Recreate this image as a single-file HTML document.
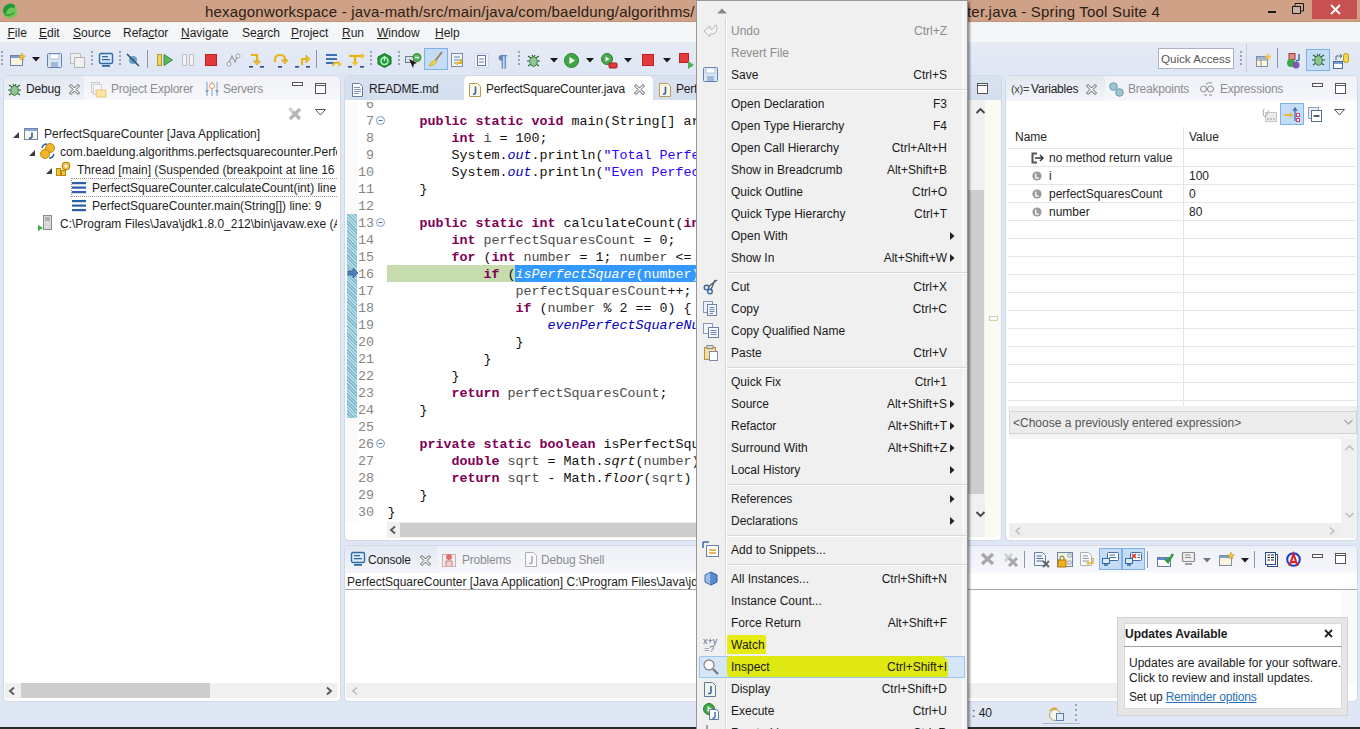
<!DOCTYPE html><html><head><meta charset="utf-8"><style>
*{margin:0;padding:0;box-sizing:border-box}
html,body{width:1360px;height:729px;overflow:hidden}
body{background:#dfe6f4;font-family:"Liberation Sans",sans-serif;font-size:12px;color:#1e1e1e;position:relative}
.a{position:absolute}
.t{position:absolute;white-space:pre;line-height:14px}
.panel{position:absolute;background:#fff;border:1px solid #d2d9e6;border-radius:5px;overflow:hidden}
.mono{font-family:"Liberation Mono",monospace;font-size:13.33px;line-height:17px;white-space:pre}
.k{color:#7f0055;font-weight:bold}
.s{color:#2a00ff}
.f{color:#0000c0;font-style:italic}
.m{font-style:italic}
.v{color:#4a4a4a}
svg{position:absolute;overflow:visible}
</style></head><body>
<div class="a" style="left:0px;top:0px;width:1360px;height:22px;background:#cfa287"></div>
<div class="a" style="left:0px;top:21px;width:1360px;height:1px;background:#c29579"></div>
<svg style="left:1px;top:2px" width="18" height="18" viewBox="0 0 18 18"><circle cx="9" cy="9" r="7.2" fill="#6cc656"/><path d="M2 9.5A7.2 7.2 0 0 1 14 3.5L13 6Q8 4 6 9L4 13Z" fill="#1f9a3a"/><path d="M4 13Q9 14 13 11" stroke="#17802e" stroke-width="1" fill="none"/></svg>
<div class="t" style="left:205px;top:3px;font-size:15px;line-height:17px;letter-spacing:0.19px;color:#2b2016">hexagonworkspace - java-math/src/main/java/com/baeldung/algorithms/</div>
<div class="t" style="left:967px;top:3px;font-size:15px;line-height:17px;letter-spacing:0.19px;color:#2b2016">ter.java - Spring Tool Suite 4</div>
<div class="a" style="left:1268px;top:11px;width:8px;height:2px;background:#1a1a1a"></div>
<svg style="left:1292px;top:3px" width="12" height="11" viewBox="0 0 12 11"><rect x="0.5" y="3.5" width="8" height="7" fill="#c8b4a6" stroke="#1a1a1a"/><path d="M3 3.5V0.5H11.5V8H9" fill="none" stroke="#1a1a1a"/></svg>
<div class="a" style="left:1312px;top:0px;width:45px;height:19px;background:#c75050"></div>
<svg style="left:1330px;top:4px" width="11" height="11" viewBox="0 0 11 11"><path d="M1 1L10 10M10 1L1 10" stroke="#fff" stroke-width="1.8"/></svg>
<div class="a" style="left:0px;top:22px;width:1360px;height:20px;background:#f5f6f8"></div>
<div class="t" style="left:7.5px;top:26px;color:#1e1e1e"><u>F</u>ile</div>
<div class="t" style="left:39px;top:26px;color:#1e1e1e"><u>E</u>dit</div>
<div class="t" style="left:73px;top:26px;color:#1e1e1e"><u>S</u>ource</div>
<div class="t" style="left:123px;top:26px;color:#1e1e1e">Refa<u>c</u>tor</div>
<div class="t" style="left:181px;top:26px;color:#1e1e1e"><u>N</u>avigate</div>
<div class="t" style="left:242px;top:26px;color:#1e1e1e">Se<u>a</u>rch</div>
<div class="t" style="left:291px;top:26px;color:#1e1e1e"><u>P</u>roject</div>
<div class="t" style="left:342px;top:26px;color:#1e1e1e"><u>R</u>un</div>
<div class="t" style="left:377px;top:26px;color:#1e1e1e"><u>W</u>indow</div>
<div class="t" style="left:435px;top:26px;color:#1e1e1e"><u>H</u>elp</div>
<div class="a" style="left:0px;top:42px;width:1360px;height:32px;background:linear-gradient(#e6ebf5,#dfe6f4)"></div>
<svg style="left:1px;top:50px" width="3" height="18" viewBox="0 0 3 18"><rect x="0" y="1" width="2" height="2" fill="#9aa3b3"/><rect x="0" y="5" width="2" height="2" fill="#9aa3b3"/><rect x="0" y="9" width="2" height="2" fill="#9aa3b3"/><rect x="0" y="13" width="2" height="2" fill="#9aa3b3"/></svg>
<svg style="left:10px;top:53px" width="15" height="14" viewBox="0 0 15 14"><rect x="0.5" y="2.5" width="12" height="10" fill="#fbf4dc" stroke="#6f86a8"/><rect x="1" y="3" width="11" height="2" fill="#7ea0d0"/><path d="M12 0l1 2.5 2.5 0.5-2 1.5 0.5 2.5-2-1.5-2 1.5 0.5-2.5-2-1.5 2.5-0.5z" fill="#f5c542" stroke="#c9951a" stroke-width="0.5"/></svg>
<svg style="left:32px;top:57px" width="8" height="5" viewBox="0 0 8 5"><path d="M0 0H8L4 4.5Z" fill="#1a1a1a"/></svg>
<svg style="left:47px;top:53px" width="15" height="15" viewBox="0 0 15 15"><rect x="0.5" y="0.5" width="14" height="14" rx="1" fill="#dbe6f3" stroke="#5f82b5"/><rect x="3" y="1" width="9" height="5" fill="#fff" stroke="#8aa5cc" stroke-width="0.6"/><rect x="4" y="9" width="7" height="5" fill="#9fb7d8"/></svg>
<svg style="left:70px;top:53px" width="15" height="15" viewBox="0 0 15 15"><rect x="0.5" y="0.5" width="10" height="10" fill="#eee" stroke="#bbb"/><rect x="4.5" y="4.5" width="10" height="10" fill="#f0f0f0" stroke="#b5b5b5"/></svg>
<svg style="left:91px;top:50px" width="3" height="18" viewBox="0 0 3 18"><rect x="0" y="1" width="2" height="2" fill="#9aa3b3"/><rect x="0" y="5" width="2" height="2" fill="#9aa3b3"/><rect x="0" y="9" width="2" height="2" fill="#9aa3b3"/><rect x="0" y="13" width="2" height="2" fill="#9aa3b3"/></svg>
<svg style="left:99px;top:53px" width="14" height="14" viewBox="0 0 14 14"><rect x="0.5" y="0.5" width="13" height="10" rx="1.5" fill="#dfeaf7" stroke="#2f6aa8" stroke-width="1.4"/><rect x="3" y="3" width="6" height="1.3" fill="#2f6aa8"/><rect x="3" y="6" width="8" height="1.3" fill="#2f6aa8"/><rect x="3" y="12" width="8" height="1.8" fill="#2f6aa8"/></svg>
<svg style="left:119px;top:50px" width="3" height="18" viewBox="0 0 3 18"><rect x="0" y="1" width="2" height="2" fill="#9aa3b3"/><rect x="0" y="5" width="2" height="2" fill="#9aa3b3"/><rect x="0" y="9" width="2" height="2" fill="#9aa3b3"/><rect x="0" y="13" width="2" height="2" fill="#9aa3b3"/></svg>
<svg style="left:126px;top:53px" width="14" height="14" viewBox="0 0 14 14"><circle cx="7" cy="7" r="4" fill="#6c9fbf"/><path d="M1 1L13 13" stroke="#1e4f78" stroke-width="1.5"/></svg>
<div class="a" style="left:147px;top:50px;width:1px;height:18px;background:#8c96a8"></div>
<svg style="left:157px;top:53px" width="16" height="14" viewBox="0 0 16 14"><rect x="0.5" y="1.5" width="4" height="11" fill="#f2d35b" stroke="#b39a2a"/><path d="M7 1.5L15.5 7L7 12.5Z" fill="#5cb85c" stroke="#3c8a3c"/></svg>
<svg style="left:182px;top:53px" width="12" height="14" viewBox="0 0 12 14"><rect x="0.5" y="1.5" width="4" height="11" fill="#f2f2f2" stroke="#c0c0c0"/><rect x="7.5" y="1.5" width="4" height="11" fill="#f2f2f2" stroke="#c0c0c0"/></svg>
<svg style="left:205px;top:53px" width="12" height="12" viewBox="0 0 12 12"><rect x="0.5" y="1.5" width="11" height="11" fill="#e23a3a" stroke="#c01f1f"/></svg>
<svg style="left:226px;top:53px" width="14" height="14" viewBox="0 0 14 14"><path d="M2 12L6 3L9 9L12 2" fill="none" stroke="#9aa0a8" stroke-width="1.3"/><circle cx="3" cy="11" r="2" fill="#fff" stroke="#999"/><circle cx="12" cy="3" r="2" fill="#fff" stroke="#999"/></svg>
<svg style="left:249px;top:53px" width="15" height="15" viewBox="0 0 15 15"><path d="M2 2H8V9" fill="none" stroke="#e7b416" stroke-width="2.2"/><path d="M4.5 8H11.5L8 12Z" fill="#f4c430" stroke="#c99400" stroke-width="0.6"/><rect x="0" y="13" width="4" height="1.6" fill="#2a4b80"/><rect x="11" y="13" width="4" height="1.6" fill="#2a4b80"/></svg>
<svg style="left:272px;top:53px" width="16" height="15" viewBox="0 0 16 15"><path d="M3 9V6a5 4 0 0 1 10 0V8" fill="none" stroke="#e7b416" stroke-width="2.2"/><path d="M9.5 7H16L13 11Z" fill="#f4c430" stroke="#c99400" stroke-width="0.6"/><rect x="6" y="13" width="4" height="1.6" fill="#2a4b80"/></svg>
<svg style="left:295px;top:53px" width="16" height="15" viewBox="0 0 16 15"><path d="M7 12V6H12" fill="none" stroke="#e7b416" stroke-width="2.2"/><path d="M11 2L15 6L11 10Z" fill="#f4c430" stroke="#c99400" stroke-width="0.6"/><rect x="0" y="13" width="4" height="1.6" fill="#2a4b80"/><rect x="11" y="13" width="4" height="1.6" fill="#2a4b80"/></svg>
<div class="a" style="left:316px;top:50px;width:1px;height:18px;background:#8c96a8"></div>
<svg style="left:326px;top:53px" width="16" height="16" viewBox="0 0 16 16"><rect x="0" y="1" width="11" height="2" fill="#3d6fb6"/><rect x="0" y="5" width="11" height="2" fill="#3d6fb6"/><rect x="0" y="9" width="8" height="2" fill="#3d6fb6"/><path d="M7 13a4 3 0 0 1 6-3" fill="none" stroke="#e7b416" stroke-width="2"/><path d="M12 8l4 3-4 3z" fill="#f4c430"/></svg>
<svg style="left:348px;top:53px" width="17" height="15" viewBox="0 0 17 15"><path d="M1 3H14" stroke="#e7b416" stroke-width="2.2"/><path d="M7 3V10" stroke="#e7b416" stroke-width="2.2"/><path d="M3.5 9H10.5L7 13Z" fill="#f4c430"/><path d="M13 0L17 3L13 6Z" fill="#f4c430"/><rect x="0" y="13" width="4" height="1.6" fill="#2a4b80"/><rect x="12" y="13" width="4" height="1.6" fill="#2a4b80"/></svg>
<svg style="left:370px;top:50px" width="3" height="18" viewBox="0 0 3 18"><rect x="0" y="1" width="2" height="2" fill="#9aa3b3"/><rect x="0" y="5" width="2" height="2" fill="#9aa3b3"/><rect x="0" y="9" width="2" height="2" fill="#9aa3b3"/><rect x="0" y="13" width="2" height="2" fill="#9aa3b3"/></svg>
<svg style="left:377px;top:53px" width="15" height="15" viewBox="0 0 15 15"><path d="M7.5 0.5L14 4V11L7.5 14.5L1 11V4Z" fill="#1e9e3a" stroke="#127028"/><circle cx="7.5" cy="8" r="3.5" fill="none" stroke="#c8f0c8" stroke-width="1.4"/><rect x="6.8" y="3" width="1.4" height="5" fill="#c8f0c8"/></svg>
<svg style="left:398px;top:50px" width="3" height="18" viewBox="0 0 3 18"><rect x="0" y="1" width="2" height="2" fill="#9aa3b3"/><rect x="0" y="5" width="2" height="2" fill="#9aa3b3"/><rect x="0" y="9" width="2" height="2" fill="#9aa3b3"/><rect x="0" y="13" width="2" height="2" fill="#9aa3b3"/></svg>
<svg style="left:405px;top:53px" width="16" height="16" viewBox="0 0 16 16"><rect x="0.5" y="3.5" width="8" height="6" fill="#dbe3ee" stroke="#6d7b8f"/><path d="M4 6L8 15L9 11L12 10Z" fill="#1a1a1a"/><circle cx="12" cy="4.5" r="4" fill="#5cb85c" stroke="#2f8a2f"/><path d="M10 4.5H14" stroke="#fff" stroke-width="1.2"/></svg>
<div class="a" style="left:424px;top:48px;width:24px;height:22px;background:#c4dcf6;border:1px solid #7fb0e8"></div>
<svg style="left:428px;top:51px" width="16" height="16" viewBox="0 0 16 16"><path d="M14 1L7 10" stroke="#9a8a5a" stroke-width="2"/><path d="M7 9Q3 10 1 15Q6 15 9 11Z" fill="#f0d050" stroke="#c0a020" stroke-width="0.6"/></svg>
<svg style="left:451px;top:53px" width="16" height="15" viewBox="0 0 16 15"><rect x="0.5" y="0.5" width="11" height="13" fill="#f2f5fa" stroke="#7d8ea8"/><path d="M3 4H9M3 7H9M3 10H7" stroke="#6d82a8"/><path d="M10 6V10H6" fill="none" stroke="#e3b21e" stroke-width="2"/><path d="M7 8L4 10.5L7 13Z" fill="#f4c430"/></svg>
<svg style="left:474px;top:53px" width="15" height="15" viewBox="0 0 15 15"><rect x="0.5" y="0.5" width="14" height="14" fill="#eef2f8" stroke="#b9c7da" stroke-dasharray="1 1"/><rect x="3.5" y="2.5" width="8" height="10" fill="#fff" stroke="#5d7aa8"/><path d="M5 6H10M5 9H10" stroke="#5d7aa8"/></svg>
<div class="t" style="left:498px;top:53px;font-size:17px;font-weight:bold;color:#5d86c0;line-height:17px">¶</div>
<svg style="left:518px;top:50px" width="3" height="18" viewBox="0 0 3 18"><rect x="0" y="1" width="2" height="2" fill="#9aa3b3"/><rect x="0" y="5" width="2" height="2" fill="#9aa3b3"/><rect x="0" y="9" width="2" height="2" fill="#9aa3b3"/><rect x="0" y="13" width="2" height="2" fill="#9aa3b3"/></svg>
<svg style="left:526px;top:53px" width="15" height="15" viewBox="0 0 15 15"><g transform="scale(1)"><path d="M2 3L5 5M13 3L10 5M1 8H4M11 8H14M2 13L5 11M13 13L10 11M6 2L7 4M9 2L8 4" stroke="#2b5a2b" stroke-width="1.1"/><ellipse cx="7.5" cy="8.5" rx="3.8" ry="4.8" fill="#8fc794" stroke="#3f7a3f"/></g></svg>
<svg style="left:550px;top:58px" width="8" height="5" viewBox="0 0 8 5"><path d="M0 0H8L4 4.5Z" fill="#1a1a1a"/></svg>
<svg style="left:564px;top:53px" width="15" height="15" viewBox="0 0 15 15"><circle cx="7.5" cy="7.5" r="7" fill="#3fa845" stroke="#2a7e2e"/><path d="M5.5 4L11 7.5L5.5 11Z" fill="#fff"/></svg>
<svg style="left:586px;top:58px" width="8" height="5" viewBox="0 0 8 5"><path d="M0 0H8L4 4.5Z" fill="#1a1a1a"/></svg>
<svg style="left:601px;top:53px" width="17" height="16" viewBox="0 0 17 16"><circle cx="6" cy="6" r="5.5" fill="#4aa84f" stroke="#2a7e2e"/><path d="M4.5 3.5L8.5 6L4.5 8.5Z" fill="#fff"/><rect x="8" y="10" width="8" height="5" rx="1" fill="#e23a3a" stroke="#a81f1f"/></svg>
<svg style="left:624px;top:58px" width="8" height="5" viewBox="0 0 8 5"><path d="M0 0H8L4 4.5Z" fill="#1a1a1a"/></svg>
<svg style="left:642px;top:53px" width="12" height="12" viewBox="0 0 12 12"><rect x="0.5" y="1.5" width="11" height="11" fill="#e23a3a" stroke="#c01f1f"/></svg>
<svg style="left:663px;top:58px" width="8" height="5" viewBox="0 0 8 5"><path d="M0 0H8L4 4.5Z" fill="#1a1a1a"/></svg>
<svg style="left:679px;top:53px" width="15" height="16" viewBox="0 0 15 16"><rect x="0.5" y="0.5" width="9" height="9" fill="#e23a3a" stroke="#c01f1f"/><path d="M9 8L15 12L9 16Z" fill="#4caf50"/></svg>
<div class="a" style="left:1158px;top:48px;width:76px;height:21px;background:#fff;border:1px solid #a9b3c2"></div>
<div class="t" style="left:1161px;top:52px;font-size:11.6px;color:#555">Quick Access</div>
<svg style="left:1240px;top:50px" width="3" height="18" viewBox="0 0 3 18"><rect x="0" y="1" width="2" height="2" fill="#9aa3b3"/><rect x="0" y="5" width="2" height="2" fill="#9aa3b3"/><rect x="0" y="9" width="2" height="2" fill="#9aa3b3"/><rect x="0" y="13" width="2" height="2" fill="#9aa3b3"/></svg>
<div class="a" style="left:1246px;top:44px;width:1px;height:28px;background:#c5cede"></div>
<svg style="left:1256px;top:53px" width="15" height="15" viewBox="0 0 15 15"><rect x="0.5" y="3.5" width="11" height="10" fill="#fff5d8" stroke="#7f8ea3"/><path d="M0.5 7H11.5M5 7V13.5" stroke="#7f8ea3"/><rect x="1" y="4" width="10" height="2.5" fill="#9bb4d6"/><path d="M12 0l1 2.5 2.5 0.5-2 1.5 0.5 2.5-2-1.5-2 1.5 0.5-2.5-2-1.5 2.5-0.5z" fill="#f5c542"/></svg>
<div class="a" style="left:1277px;top:48px;width:1px;height:20px;background:#8c96a8"></div>
<svg style="left:1286px;top:53px" width="16" height="16" viewBox="0 0 16 16"><rect x="3" y="0.5" width="6" height="6" fill="#e08a8a" stroke="#a03a3a"/><circle cx="5" cy="10" r="4" fill="#3fa845"/><circle cx="10" cy="12" r="3.5" fill="#7c5ab0"/><path d="M13 1V7L10 8" fill="none" stroke="#3a6fb0" stroke-width="1.5"/></svg>
<div class="a" style="left:1306px;top:49px;width:24px;height:22px;background:#c4dcf6;border:1px solid #7fb0e8"></div>
<svg style="left:1311px;top:52px" width="15" height="15" viewBox="0 0 15 15"><g transform="scale(1)"><path d="M2 3L5 5M13 3L10 5M1 8H4M11 8H14M2 13L5 11M13 13L10 11M6 2L7 4M9 2L8 4" stroke="#2b5a2b" stroke-width="1.1"/><ellipse cx="7.5" cy="8.5" rx="3.8" ry="4.8" fill="#8fc794" stroke="#3f7a3f"/></g></svg>
<svg style="left:1333px;top:53px" width="16" height="16" viewBox="0 0 16 16"><rect x="0.5" y="8.5" width="9" height="7" fill="#fff" stroke="#4a6a9a"/><rect x="1" y="9" width="8" height="2" fill="#7ea0d0"/><rect x="10.5" y="0.5" width="5" height="9" rx="2" fill="#f5d54a" stroke="#b89b10"/><path d="M3 7V3H9M7 1L9 3L7 5" fill="none" stroke="#4a6a9a"/></svg>
<div class="panel" style="left:3px;top:75px;width:338px;height:627px;background:#fff">
<div class="a" style="left:0px;top:0px;width:338px;height:24px;background:linear-gradient(#f0f2f8,#f7f8fb)"></div>
<div class="a" style="left:0px;top:0px;width:80px;height:24px;background:linear-gradient(#e3e8f2,#eef1f7);border-top-right-radius:4px"></div>
</div>
<svg style="left:7px;top:82px" width="15" height="15" viewBox="0 0 15 15"><g transform="scale(1)"><path d="M2 3L5 5M13 3L10 5M1 8H4M11 8H14M2 13L5 11M13 13L10 11M6 2L7 4M9 2L8 4" stroke="#2b5a2b" stroke-width="1.1"/><ellipse cx="7.5" cy="8.5" rx="3.8" ry="4.8" fill="#8fc794" stroke="#3f7a3f"/></g></svg>
<div class="t" style="left:26px;top:82px;color:#1e1e1e;font-size:12px;letter-spacing:-0.2px">Debug</div>
<svg style="left:69px;top:84px" width="11" height="11" viewBox="0 0 11 11"><path d="M0.5 2L2 0.5L5.5 4L9 0.5L10.5 2L7 5.5L10.5 9L9 10.5L5.5 7L2 10.5L0.5 9L4 5.5Z" fill="#fff" stroke="#555" stroke-width="1"/></svg>
<svg style="left:91px;top:82px" width="16" height="16" viewBox="0 0 16 16"><rect x="0.5" y="0.5" width="8" height="10" fill="#f5f5f5" stroke="#c9c9c9"/><rect x="2.5" y="2.5" width="8" height="10" fill="#f8f8f8" stroke="#cfcfcf"/><path d="M5 8H15V15H5Z" fill="#fbe3a0" stroke="#e0c070" stroke-width="0.8"/></svg>
<div class="t" style="left:111px;top:82px;color:#8d8d8d;font-size:12px;letter-spacing:-0.2px">Project Explorer</div>
<svg style="left:204px;top:81px" width="15" height="16" viewBox="0 0 15 16"><path d="M3 1V15M8 1V15M13 1V15" stroke="#7da0c8" stroke-width="1"/><circle cx="8" cy="5" r="2.5" fill="#fff" stroke="#e8955a"/><path d="M1 9L5 9L3 12Z M11 9L15 9L13 12Z" fill="#7da0c8"/></svg>
<div class="t" style="left:223px;top:82px;color:#8d8d8d;font-size:12px;letter-spacing:-0.2px">Servers</div>
<svg style="left:292px;top:82px" width="11" height="4" viewBox="0 0 11 4"><rect x="0.5" y="0.5" width="10" height="3" fill="#fff" stroke="#555"/></svg>
<svg style="left:315px;top:83px" width="11" height="11" viewBox="0 0 11 11"><rect x="0.5" y="0.5" width="10" height="10" fill="#fff" stroke="#555"/><path d="M0.5 2.5H10.5" stroke="#555"/></svg>
<svg style="left:287px;top:106px" width="16" height="15" viewBox="0 0 16 15"><path d="M3 3L13 13M13 3L3 13" stroke="#b5b5b5" stroke-width="3.2"/><path d="M2 2L6 6" stroke="#d8d8d8" stroke-width="3"/></svg>
<svg style="left:315px;top:109px" width="11" height="7" viewBox="0 0 11 7"><path d="M0.5 0.5H10.5L5.5 6Z" fill="#fff" stroke="#555"/></svg>
<div class="a" style="left:4px;top:120px;width:333px;height:120px;overflow:hidden">
<svg style="left:9px;top:12px" width="7" height="7" viewBox="0 0 7 7"><path d="M6 0V6H0Z" fill="#3c3c3c"/></svg>
<svg style="left:20px;top:8px" width="15" height="13" viewBox="0 0 15 13"><rect x="0.5" y="0.5" width="13" height="11" fill="#f3f6e8" stroke="#6f86a8"/><rect x="1" y="1" width="12" height="2" fill="#88a8d8"/><path d="M8 4.5V8.5Q8 10.5 5 10" fill="none" stroke="#2a4e9a" stroke-width="1.5"/></svg>
<div class="t" style="left:40px;top:7px;color:#1e1e1e">PerfectSquareCounter [Java Application]</div>
<svg style="left:25px;top:30px" width="7" height="7" viewBox="0 0 7 7"><path d="M6 0V6H0Z" fill="#3c3c3c"/></svg>
<svg style="left:36px;top:23px" width="16" height="16" viewBox="0 0 16 16"><circle cx="10" cy="5" r="4.5" fill="#f0b52a" stroke="#c88a10"/><circle cx="5" cy="11" r="4.5" fill="#f0b52a" stroke="#c88a10"/><path d="M2 5Q3 1 7 1M14 11Q13 15 9 15" fill="none" stroke="#2a5aa0" stroke-width="1.4"/></svg>
<div class="t" style="left:56px;top:25px;color:#1e1e1e">com.baeldung.algorithms.perfectsquarecounter.PerfectSquareCounter at localhost:55555</div>
<svg style="left:42px;top:48px" width="7" height="7" viewBox="0 0 7 7"><path d="M6 0V6H0Z" fill="#3c3c3c"/></svg>
<svg style="left:52px;top:41px" width="16" height="16" viewBox="0 0 16 16"><rect x="0.5" y="7.5" width="4" height="7" fill="#f0c040" stroke="#b88a10"/><rect x="5.5" y="9.5" width="4" height="5" fill="#f0c040" stroke="#b88a10"/><circle cx="10" cy="5" r="4" fill="#f5c040" stroke="#a87a10"/><circle cx="10" cy="5" r="1.5" fill="#fff"/></svg>
<div class="t" style="left:73px;top:43px;color:#1e1e1e">Thread [main] (Suspended (breakpoint at line 16 in PerfectSquareCounter))</div>
<div class="a" style="left:67px;top:58px;width:270px;height:19px;border:1px dotted #9a9a9a;background:#fafafa"></div>
<svg style="left:68px;top:62px" width="14" height="12" viewBox="0 0 14 12"><rect x="0" y="0" width="14" height="2.2" fill="#2d5fa8"/><rect x="0" y="4.5" width="14" height="2.2" fill="#2d5fa8"/><rect x="0" y="9" width="14" height="2.2" fill="#2d5fa8"/></svg>
<div class="t" style="left:88px;top:61px;color:#1e1e1e">PerfectSquareCounter.calculateCount(int) line: 16</div>
<svg style="left:68px;top:80px" width="14" height="12" viewBox="0 0 14 12"><rect x="0" y="0" width="14" height="2.2" fill="#2d5fa8"/><rect x="0" y="4.5" width="14" height="2.2" fill="#2d5fa8"/><rect x="0" y="9" width="14" height="2.2" fill="#2d5fa8"/></svg>
<div class="t" style="left:88px;top:79px;color:#1e1e1e">PerfectSquareCounter.main(String[]) line: 9</div>
<svg style="left:34px;top:95px" width="16" height="16" viewBox="0 0 16 16"><rect x="5.5" y="0.5" width="8" height="14" fill="#d8d8d8" stroke="#8a8a8a"/><path d="M7 3H12M7 5H12" stroke="#8a8a8a"/><path d="M0 10L5 13L0 16Z" fill="#3faa48"/></svg>
<div class="t" style="left:56px;top:97px;color:#1e1e1e">C:\Program Files\Java\jdk1.8.0_212\bin\javaw.exe (Apr 2, 2019)</div>
</div>
<div class="a" style="left:5px;top:683px;width:333px;height:15px;background:#f0f0f0"></div>
<div class="a" style="left:21px;top:683px;width:189px;height:15px;background:#cdcdcd"></div>
<svg style="left:9px;top:687px" width="6" height="8" viewBox="0 0 6 8"><path d="M5 0.5L1 4L5 7.5" fill="none" stroke="#555" stroke-width="1.8"/></svg>
<svg style="left:326px;top:687px" width="6" height="8" viewBox="0 0 6 8"><path d="M1 0.5L5 4L1 7.5" fill="none" stroke="#555" stroke-width="1.8"/></svg>
<div class="panel" style="left:344px;top:75px;width:658px;height:466px;background:#fff">
<div class="a" style="left:0px;top:0px;width:658px;height:25px;background:linear-gradient(#d9e2f0,#d3ddec)"></div>
<div class="a" style="left:119px;top:0px;width:189px;height:26px;background:#fff;border-radius:5px 5px 0 0"></div>
</div>
<svg style="left:352px;top:83px" width="11" height="14" viewBox="0 0 11 14"><path d="M0.5 0.5H7.5L10.5 3.5V13.5H0.5Z" fill="#fff" stroke="#6a7f9f"/><path d="M2 4.5H8M2 6.5H9M2 8.5H9M2 10.5H7" stroke="#5a72a8" stroke-width="0.8"/></svg>
<div class="t" style="left:369px;top:82px;color:#1e1e1e;font-size:12px;letter-spacing:-0.2px">README.md</div>
<svg style="left:469px;top:83px" width="12" height="14" viewBox="0 0 12 14"><path d="M0.5 0.5H8.5L11.5 3.5V13.5H0.5Z" fill="#fdf8e6" stroke="#b59b55"/><path d="M6.5 3.5V9.5Q6.5 11.5 4 11" fill="none" stroke="#2a5db0" stroke-width="1.6"/></svg>
<div class="t" style="left:486px;top:82px;color:#1e1e1e;font-size:12px;letter-spacing:-0.2px">PerfectSquareCounter.java</div>
<svg style="left:634px;top:84px" width="11" height="11" viewBox="0 0 11 11"><path d="M0.5 2L2 0.5L5.5 4L9 0.5L10.5 2L7 5.5L10.5 9L9 10.5L5.5 7L2 10.5L0.5 9L4 5.5Z" fill="#fff" stroke="#555" stroke-width="1"/></svg>
<svg style="left:659px;top:83px" width="12" height="14" viewBox="0 0 12 14"><path d="M0.5 0.5H8.5L11.5 3.5V13.5H0.5Z" fill="#fdf8e6" stroke="#b59b55"/><path d="M6.5 3.5V9.5Q6.5 11.5 4 11" fill="none" stroke="#2a5db0" stroke-width="1.6"/></svg>
<div class="t" style="left:676px;top:82px;color:#1e1e1e;font-size:12px;letter-spacing:-0.2px">PerfectSquareCounter.java</div>
<svg style="left:977px;top:83px" width="11" height="11" viewBox="0 0 11 11"><rect x="0.5" y="0.5" width="10" height="10" fill="#fff" stroke="#555"/><path d="M0.5 2.5H10.5" stroke="#555"/></svg>
<div class="a" style="left:345px;top:100px;width:622px;height:3px;background:#fff"></div>
<div class="a" style="left:345px;top:102px;width:622px;height:420px;overflow:hidden;background:#fff">
<div class="a" style="left:0px;top:0px;width:13px;height:420px;background:#fbfbfb"></div>
<div class="a" style="left:2px;top:112px;width:10px;height:204px;background:repeating-linear-gradient(45deg,#7dbcd0 0 1.2px,#b5dce8 1.2px 2.4px)"></div>
<div class="a" style="left:42px;top:163px;width:400px;height:17px;background:#c6dbae"></div>
<div class="a" style="left:170px;top:163px;width:300px;height:17px;background:#3399ff"></div>
<div class="a mono" style="left:13px;top:-6.5px;color:#858585"> 6
 7
 8
 9
10
11
12
13
14
15
16
17
18
19
20
21
22
23
24
25
26
27
28
29
30</div>
<div class="a mono" style="left:42.5px;top:-6.5px;color:#111">
    <span class="k">public</span> <span class="k">static</span> <span class="k">void</span> main(String[] args) {
        <span class="k">int</span> <span class="v">i</span> = 100;
        System.<span class="f">out</span>.println(<span class="s">"Total Perfect Squares: "</span> + calculateCount(i));
        System.<span class="f">out</span>.println(<span class="s">"Even Perfect Squares : "</span> + evenPerfectSquareNumber);
    }

    <span class="k">public</span> <span class="k">static</span> <span class="k">int</span> calculateCount(<span class="k">int</span> i) {
        <span class="k">int</span> <span class="v">perfectSquaresCount</span> = 0;
        <span class="k">for</span> (<span class="k">int</span> <span class="v">number</span> = 1; <span class="v">number</span> &lt;= i; <span class="v">number</span>++) {
            <span class="k">if</span> (<span style="color:#fff"><span class="m">isPerfectSquare</span>(number)</span>) {
                <span class="v">perfectSquaresCount</span>++;
                <span class="k">if</span> (<span class="v">number</span> % 2 == 0) {
                    <span class="f">evenPerfectSquareNumber</span>++;
                }
            }
        }
        <span class="k">return</span> <span class="v">perfectSquaresCount</span>;
    }

    <span class="k">private</span> <span class="k">static</span> <span class="k">boolean</span> isPerfectSquare(<span class="k">int</span> number) {
        <span class="k">double</span> <span class="v">sqrt</span> = Math.<span class="m">sqrt</span>(<span class="v">number</span>);
        <span class="k">return</span> <span class="v">sqrt</span> - Math.<span class="m">floor</span>(<span class="v">sqrt</span>) == 0;
    }
}</div>
<svg style="left:31px;top:13.5px" width="9" height="9" viewBox="0 0 9 9"><circle cx="4.5" cy="4.5" r="4" fill="#fff" stroke="#7a9cc6"/><path d="M2.5 4.5H6.5" stroke="#4a6c96"/></svg>
<svg style="left:31px;top:115.5px" width="9" height="9" viewBox="0 0 9 9"><circle cx="4.5" cy="4.5" r="4" fill="#fff" stroke="#7a9cc6"/><path d="M2.5 4.5H6.5" stroke="#4a6c96"/></svg>
<svg style="left:31px;top:336.5px" width="9" height="9" viewBox="0 0 9 9"><circle cx="4.5" cy="4.5" r="4" fill="#fff" stroke="#7a9cc6"/><path d="M2.5 4.5H6.5" stroke="#4a6c96"/></svg>
<svg style="left:3px;top:166px" width="11" height="10" viewBox="0 0 11 10"><path d="M0 3H5V0L10 5L5 10V7H0Z" fill="#4a7fc0" stroke="#2a4f80" stroke-width="0.6"/></svg>
</div>
<div class="a" style="left:387px;top:522px;width:310px;height:16px;background:#f0f0f0"></div>
<div class="a" style="left:400px;top:523px;width:297px;height:14px;background:#cdcdcd"></div>
<svg style="left:390px;top:526px" width="6" height="8" viewBox="0 0 6 8"><path d="M5 0.5L1 4L5 7.5" fill="none" stroke="#555" stroke-width="1.8"/></svg>
<div class="a" style="left:967px;top:100px;width:18px;height:437px;background:#f0f0f0"></div>
<div class="a" style="left:968px;top:190px;width:16px;height:304px;background:#cdcdcd"></div>
<svg style="left:976px;top:108px" width="9" height="6" viewBox="0 0 9 6"><path d="M0.5 5L4.5 1L8.5 5" fill="none" stroke="#444" stroke-width="1.8"/></svg>
<svg style="left:976px;top:511px" width="9" height="6" viewBox="0 0 9 6"><path d="M0.5 1L4.5 5L8.5 1" fill="none" stroke="#444" stroke-width="1.8"/></svg>
<div class="a" style="left:985px;top:100px;width:16px;height:437px;background:#fbfbf6"></div>
<div class="a" style="left:989px;top:316px;width:9px;height:5px;border:1px solid #d8d0a0"></div>
<div class="panel" style="left:1005px;top:75px;width:353px;height:466px;background:#fff">
<div class="a" style="left:0px;top:0px;width:353px;height:25px;background:linear-gradient(#eef1f8,#f6f7fb)"></div>
<div class="a" style="left:0px;top:0px;width:99px;height:25px;background:linear-gradient(#e2e7f1,#f3f5f9);border-top-right-radius:4px"></div>
</div>
<div class="t" style="left:1011px;top:82px;color:#444;font-size:11px;letter-spacing:-0.3px;line-height:15px">(x)=</div>
<div class="t" style="left:1031px;top:82px;color:#1e1e1e;font-size:12px;letter-spacing:-0.2px">Variables</div>
<svg style="left:1086px;top:84px" width="11" height="11" viewBox="0 0 11 11"><path d="M0.5 2L2 0.5L5.5 4L9 0.5L10.5 2L7 5.5L10.5 9L9 10.5L5.5 7L2 10.5L0.5 9L4 5.5Z" fill="#fff" stroke="#555" stroke-width="1"/></svg>
<svg style="left:1109px;top:82px" width="15" height="15" viewBox="0 0 15 15"><circle cx="4.5" cy="4.5" r="3.8" fill="#9cc7d0" stroke="#6a9aa8"/><circle cx="10.5" cy="10.5" r="3.8" fill="#9cc7d0" stroke="#6a9aa8"/></svg>
<div class="t" style="left:1128px;top:82px;color:#8d8d8d;font-size:12px;letter-spacing:-0.2px">Breakpoints</div>
<svg style="left:1200px;top:82px" width="16" height="14" viewBox="0 0 16 14"><circle cx="3.5" cy="7" r="3" fill="none" stroke="#8a8a8a"/><circle cx="10.5" cy="7" r="3" fill="none" stroke="#8a8a8a"/><path d="M6 2Q8 0 12 1" fill="none" stroke="#8a8a8a"/><path d="M4 13H7M9 13H12" stroke="#8a8a8a"/></svg>
<div class="t" style="left:1220px;top:82px;color:#8d8d8d;font-size:12px;letter-spacing:-0.2px">Expressions</div>
<svg style="left:1312px;top:83px" width="11" height="4" viewBox="0 0 11 4"><rect x="0.5" y="0.5" width="10" height="3" fill="#fff" stroke="#555"/></svg>
<svg style="left:1335px;top:83px" width="11" height="11" viewBox="0 0 11 11"><rect x="0.5" y="0.5" width="10" height="10" fill="#fff" stroke="#555"/><path d="M0.5 2.5H10.5" stroke="#555"/></svg>
<svg style="left:1261px;top:107px" width="16" height="15" viewBox="0 0 16 15"><rect x="4.5" y="5.5" width="11" height="9" fill="#ececec" stroke="#c8c8c8"/><path d="M3 2Q1 8 4 10Q6 8 8 3" fill="none" stroke="#aaa"/><path d="M6 12H8M9 12H11M12 12H14" stroke="#999"/></svg>
<div class="a" style="left:1280px;top:103px;width:24px;height:22px;background:#c4dcf6;border:1px solid #7fb0e8"></div>
<svg style="left:1284px;top:107px" width="17" height="15" viewBox="0 0 17 15"><path d="M0 8H7" stroke="#e8b63a" stroke-width="2"/><path d="M6 5L9 8L6 11Z" fill="#e8b63a"/><path d="M11 14V2M9 4L11 1L13 4" fill="none" stroke="#3c6eb0" stroke-width="1.3"/><rect x="12.5" y="6.5" width="3" height="3" fill="#fff" stroke="#d04070"/><rect x="12.5" y="11.5" width="3" height="3" fill="#fff" stroke="#d04070"/></svg>
<svg style="left:1308px;top:107px" width="14" height="15" viewBox="0 0 14 15"><rect x="0.5" y="0.5" width="10" height="11" fill="#eef" stroke="#8da0b8"/><rect x="3.5" y="3.5" width="10" height="11" fill="#fff" stroke="#5a6f8f"/><path d="M5.5 9H11.5" stroke="#1a2a4a" stroke-width="1.5"/></svg>
<svg style="left:1334px;top:109px" width="11" height="7" viewBox="0 0 11 7"><path d="M0.5 0.5H10.5L5.5 6Z" fill="#fff" stroke="#555"/></svg>
<div class="t" style="left:1015px;top:130px;color:#1e1e1e;font-size:12px">Name</div>
<div class="t" style="left:1189px;top:130px;color:#1e1e1e;font-size:12px">Value</div>
<div class="a" style="left:1183px;top:127px;width:1px;height:280px;background:#e4e4e4"></div>
<div class="a" style="left:1008px;top:148px;width:348px;height:1px;background:#e6e6e6"></div>
<div class="a" style="left:1008px;top:166px;width:348px;height:1px;background:#e6e6e6"></div>
<div class="a" style="left:1008px;top:184px;width:348px;height:1px;background:#e6e6e6"></div>
<div class="a" style="left:1008px;top:202px;width:348px;height:1px;background:#e6e6e6"></div>
<div class="a" style="left:1008px;top:220px;width:348px;height:1px;background:#e6e6e6"></div>
<div class="a" style="left:1008px;top:238px;width:348px;height:1px;background:#e6e6e6"></div>
<div class="a" style="left:1008px;top:256px;width:348px;height:1px;background:#e6e6e6"></div>
<div class="a" style="left:1008px;top:274px;width:348px;height:1px;background:#e6e6e6"></div>
<div class="a" style="left:1008px;top:292px;width:348px;height:1px;background:#e6e6e6"></div>
<div class="a" style="left:1008px;top:310px;width:348px;height:1px;background:#e6e6e6"></div>
<div class="a" style="left:1008px;top:328px;width:348px;height:1px;background:#e6e6e6"></div>
<div class="a" style="left:1008px;top:346px;width:348px;height:1px;background:#e6e6e6"></div>
<div class="a" style="left:1008px;top:364px;width:348px;height:1px;background:#e6e6e6"></div>
<div class="a" style="left:1008px;top:382px;width:348px;height:1px;background:#e6e6e6"></div>
<div class="a" style="left:1008px;top:400px;width:348px;height:1px;background:#e6e6e6"></div>
<svg style="left:1031px;top:152px" width="13" height="12" viewBox="0 0 13 12"><path d="M6 1.5H1.5V10.5H6" fill="none" stroke="#555" stroke-width="2"/><path d="M4 6H11M9 3L12 6L9 9" fill="none" stroke="#333" stroke-width="1.4"/></svg>
<div class="t" style="left:1049px;top:151px;color:#1e1e1e;font-size:12px">no method return value</div>
<svg style="left:1032px;top:171px" width="10" height="10" viewBox="0 0 10 10"><circle cx="5" cy="5" r="4.6" fill="#9a9a9a"/><path d="M3.8 2.5V7.2H6.8" fill="none" stroke="#fff" stroke-width="1.3"/></svg>
<div class="t" style="left:1049px;top:169px;color:#1e1e1e;font-size:12px">i</div>
<div class="t" style="left:1189px;top:169px;color:#1e1e1e;font-size:12px">100</div>
<svg style="left:1032px;top:189px" width="10" height="10" viewBox="0 0 10 10"><circle cx="5" cy="5" r="4.6" fill="#9a9a9a"/><path d="M3.8 2.5V7.2H6.8" fill="none" stroke="#fff" stroke-width="1.3"/></svg>
<div class="t" style="left:1049px;top:187px;color:#1e1e1e;font-size:12px">perfectSquaresCount</div>
<div class="t" style="left:1189px;top:187px;color:#1e1e1e;font-size:12px">0</div>
<svg style="left:1032px;top:207px" width="10" height="10" viewBox="0 0 10 10"><circle cx="5" cy="5" r="4.6" fill="#9a9a9a"/><path d="M3.8 2.5V7.2H6.8" fill="none" stroke="#fff" stroke-width="1.3"/></svg>
<div class="t" style="left:1049px;top:205px;color:#1e1e1e;font-size:12px">number</div>
<div class="t" style="left:1189px;top:205px;color:#1e1e1e;font-size:12px">80</div>
<div class="a" style="left:1008px;top:406px;width:349px;height:5px;background:#f0f0f0"></div>
<div class="a" style="left:1009px;top:411px;width:348px;height:23px;background:#ececec;border:1px solid #d3d3d3"></div>
<div class="t" style="left:1013px;top:416px;color:#555;font-size:12px">&lt;Choose a previously entered expression&gt;</div>
<svg style="left:1344px;top:419px" width="9" height="6" viewBox="0 0 9 6"><path d="M0.5 1L4.5 5L8.5 1" fill="none" stroke="#aaa" stroke-width="1.4"/></svg>
<div class="a" style="left:1009px;top:434px;width:348px;height:5px;background:#f4f4f4"></div>
<div class="a" style="left:1341px;top:439px;width:16px;height:84px;background:#f0f0f0"></div>
<svg style="left:1345px;top:445px" width="9" height="6" viewBox="0 0 9 6"><path d="M0.5 5L4.5 1L8.5 5" fill="none" stroke="#bbb" stroke-width="1.4"/></svg>
<svg style="left:1345px;top:512px" width="9" height="6" viewBox="0 0 9 6"><path d="M0.5 1L4.5 5L8.5 1" fill="none" stroke="#bbb" stroke-width="1.4"/></svg>
<div class="a" style="left:1009px;top:523px;width:332px;height:15px;background:#eeeeee"></div>
<svg style="left:1015px;top:527px" width="6" height="8" viewBox="0 0 6 8"><path d="M5 0.5L1 4L5 7.5" fill="none" stroke="#bbb" stroke-width="1.4"/></svg>
<svg style="left:1329px;top:527px" width="6" height="8" viewBox="0 0 6 8"><path d="M1 0.5L5 4L1 7.5" fill="none" stroke="#bbb" stroke-width="1.4"/></svg>
<div class="a" style="left:1341px;top:523px;width:16px;height:15px;background:#f0f0f0"></div>
<div class="panel" style="left:344px;top:545px;width:1014px;height:157px;background:#fff">
<div class="a" style="left:0px;top:0px;width:1014px;height:27px;background:linear-gradient(#eef1f8,#f6f7fb)"></div>
<div class="a" style="left:0px;top:0px;width:93px;height:27px;background:linear-gradient(#e2e7f1,#f3f5f9);border-top-right-radius:4px"></div>
</div>
<svg style="left:351px;top:552px" width="14" height="15" viewBox="0 0 14 15"><rect x="0.5" y="0.5" width="13" height="10" rx="1.5" fill="#dfeaf7" stroke="#2f6aa8" stroke-width="1.4"/><rect x="3" y="3" width="6" height="1.3" fill="#2f6aa8"/><rect x="3" y="6" width="8" height="1.3" fill="#2f6aa8"/><rect x="3" y="12" width="8" height="1.8" fill="#2f6aa8"/></svg>
<div class="t" style="left:368px;top:553px;color:#1e1e1e;font-size:12px;letter-spacing:-0.2px">Console</div>
<svg style="left:420px;top:555px" width="11" height="11" viewBox="0 0 11 11"><path d="M0.5 2L2 0.5L5.5 4L9 0.5L10.5 2L7 5.5L10.5 9L9 10.5L5.5 7L2 10.5L0.5 9L4 5.5Z" fill="#fff" stroke="#555" stroke-width="1"/></svg>
<svg style="left:442px;top:552px" width="14" height="15" viewBox="0 0 14 15"><rect x="0.5" y="2.5" width="13" height="12" fill="#f2eeee" stroke="#c8b0b0"/><circle cx="7" cy="5" r="3" fill="#e07070"/><path d="M4 14V9H10V14" fill="#f5d0d0" stroke="#c08080"/></svg>
<div class="t" style="left:462px;top:553px;color:#8d8d8d;font-size:12px;letter-spacing:-0.2px">Problems</div>
<svg style="left:525px;top:552px" width="12" height="15" viewBox="0 0 12 15"><path d="M0.5 0.5H8.5L11.5 3.5V14.5H0.5Z" fill="#fafafa" stroke="#b0b0b0"/><path d="M7 4V10Q7 12 4 11.5" fill="none" stroke="#9aa6b8" stroke-width="1.5"/></svg>
<div class="t" style="left:541px;top:553px;color:#8d8d8d;font-size:12px;letter-spacing:-0.2px">Debug Shell</div>
<div class="t" style="left:347px;top:575px;color:#1e1e1e">PerfectSquareCounter [Java Application] C:\Program Files\Java\jdk1.8.0_212\bin\javaw.exe</div>
<div class="a" style="left:345px;top:589px;width:1012px;height:1px;background:#a8a8a8"></div>
<svg style="left:980px;top:552px" width="15" height="14" viewBox="0 0 15 14"><path d="M2 2L13 12M13 2L2 12" stroke="#a8a8a8" stroke-width="3.4"/></svg>
<svg style="left:1003px;top:552px" width="16" height="15" viewBox="0 0 16 15"><path d="M2 2L9 9M9 2L2 9" stroke="#d0d0d0" stroke-width="2.6"/><path d="M6 6L14 14M14 6L6 14" stroke="#a8a8a8" stroke-width="3"/></svg>
<div class="a" style="left:1024px;top:551px;width:1px;height:17px;background:#8c96a8"></div>
<svg style="left:1034px;top:552px" width="16" height="15" viewBox="0 0 16 15"><path d="M0.5 0.5H8.5L11.5 3.5V13.5H0.5Z" fill="#f2f6fb" stroke="#6d82a8"/><path d="M2.5 4H8M2.5 6.5H9M2.5 9H9" stroke="#4a68a0"/><path d="M9 9L15 15M15 9L9 15" stroke="#666" stroke-width="2"/></svg>
<svg style="left:1057px;top:552px" width="16" height="15" viewBox="0 0 16 15"><rect x="0.5" y="0.5" width="15" height="14" fill="#eef4e0" stroke="#6d82a8"/><rect x="11" y="2" width="3" height="3" fill="#fff" stroke="#6d82a8" stroke-width="0.7"/><rect x="11" y="9" width="3" height="3" fill="#fff" stroke="#6d82a8" stroke-width="0.7"/><rect x="1" y="8" width="8" height="7" fill="#f0b020" stroke="#b07a10"/><path d="M3 8V6a2 2 0 0 1 4 0V8" fill="none" stroke="#8a6a20"/></svg>
<svg style="left:1080px;top:552px" width="16" height="15" viewBox="0 0 16 15"><path d="M0.5 0.5H8.5L11.5 3.5V13.5H0.5Z" fill="#fafafa" stroke="#a8b0b8"/><path d="M2.5 4H8M2.5 6.5H9M2.5 9H9" stroke="#8a98b0"/><path d="M13 6V11H8" fill="none" stroke="#e8c060" stroke-width="2"/><path d="M9 8L6 11L9 14Z" fill="#e8c060"/></svg>
<div class="a" style="left:1099px;top:548px;width:23px;height:22px;background:#c4dcf6;border:1px solid #7fb0e8"></div>
<div class="a" style="left:1122px;top:548px;width:23px;height:22px;background:#c4dcf6;border:1px solid #7fb0e8"></div>
<svg style="left:1102px;top:551px" width="17" height="16" viewBox="0 0 17 16"><rect x="5.5" y="1.5" width="11" height="8" rx="1" fill="#fff" stroke="#3f6fa8"/><path d="M7.5 4H13M7.5 6.5H14" stroke="#3f6fa8"/><rect x="0.5" y="7.5" width="7" height="5" fill="#dfeaf7" stroke="#2f6aa8"/><path d="M2 14H6" stroke="#2f6aa8" stroke-width="1.5"/></svg>
<svg style="left:1125px;top:551px" width="17" height="16" viewBox="0 0 17 16"><rect x="5.5" y="1.5" width="11" height="8" rx="1" fill="#fff" stroke="#3f6fa8"/><path d="M7 3L11 7M11 3L7 7" stroke="#e02a2a" stroke-width="1.5"/><path d="M12.5 4H15M12.5 6.5H15" stroke="#3f6fa8"/><rect x="0.5" y="7.5" width="7" height="5" fill="#dfeaf7" stroke="#2f6aa8"/><path d="M2 14H6" stroke="#2f6aa8" stroke-width="1.5"/></svg>
<div class="a" style="left:1147px;top:551px;width:1px;height:17px;background:#8c96a8"></div>
<svg style="left:1157px;top:552px" width="16" height="15" viewBox="0 0 16 15"><rect x="0.5" y="5.5" width="13" height="9" fill="#fff" stroke="#6a7f9f"/><rect x="1" y="6" width="12" height="2" fill="#5a8ad0"/><path d="M8 7L11 10L16 2" fill="none" stroke="#2a9a3a" stroke-width="2.4"/></svg>
<svg style="left:1182px;top:552px" width="13" height="15" viewBox="0 0 13 15"><rect x="0.5" y="0.5" width="12" height="9" rx="1" fill="#eee" stroke="#8a8a8a" stroke-width="1.2"/><path d="M3 3H8M3 5.5H9" stroke="#8a8a8a"/><path d="M3 12H10" stroke="#8a8a8a" stroke-width="1.6"/></svg>
<svg style="left:1203px;top:558px" width="8" height="5" viewBox="0 0 8 5"><path d="M0 0H8L4 4.5Z" fill="#777"/></svg>
<svg style="left:1219px;top:552px" width="15" height="15" viewBox="0 0 15 15"><rect x="0.5" y="3.5" width="12" height="10" fill="#fbf4dc" stroke="#7f8ea3"/><rect x="1" y="4" width="11" height="2" fill="#7ea0d0"/><path d="M12 0l1 2.5 2.5 0.5-2 1.5 0.5 2.5-2-1.5-2 1.5 0.5-2.5-2-1.5 2.5-0.5z" fill="#f5c542" stroke="#c9951a" stroke-width="0.5"/></svg>
<svg style="left:1241px;top:558px" width="8" height="5" viewBox="0 0 8 5"><path d="M0 0H8L4 4.5Z" fill="#1a1a1a"/></svg>
<div class="a" style="left:1254px;top:551px;width:1px;height:17px;background:#8c96a8"></div>
<svg style="left:1265px;top:552px" width="13" height="15" viewBox="0 0 13 15"><rect x="2.5" y="2.5" width="10" height="12" fill="#fff" stroke="#2a4a8a"/><rect x="0.5" y="0.5" width="10" height="12" fill="#fff" stroke="#2a4a8a"/><path d="M2.5 3H5M6 3H9M2.5 5.5H5M6 5.5H9M2.5 8H5M6 8H9" stroke="#1a1a1a"/></svg>
<svg style="left:1286px;top:552px" width="15" height="15" viewBox="0 0 15 15"><circle cx="7.5" cy="7.5" r="6.3" fill="none" stroke="#1a3ad0" stroke-width="2"/><path d="M3.5 14L7.5 2L11.5 14M5 10H10" fill="none" stroke="#e02020" stroke-width="2"/></svg>
<svg style="left:1312px;top:554px" width="11" height="4" viewBox="0 0 11 4"><rect x="0.5" y="0.5" width="10" height="3" fill="#fff" stroke="#555"/></svg>
<svg style="left:1335px;top:553px" width="11" height="11" viewBox="0 0 11 11"><rect x="0.5" y="0.5" width="10" height="10" fill="#fff" stroke="#555"/><path d="M0.5 2.5H10.5" stroke="#555"/></svg>
<svg style="left:1345px;top:596px" width="9" height="6" viewBox="0 0 9 6"><path d="M0.5 5L4.5 1L8.5 5" fill="none" stroke="#ccc" stroke-width="1.4"/></svg>
<div class="a" style="left:1341px;top:590px;width:16px;height:93px;background:#fafafa"></div>
<div class="a" style="left:346px;top:683px;width:995px;height:15px;background:#f0f0f0"></div>
<svg style="left:352px;top:687px" width="6" height="8" viewBox="0 0 6 8"><path d="M5 0.5L1 4L5 7.5" fill="none" stroke="#bbb" stroke-width="1.6"/></svg>
<div class="t" style="left:972px;top:706px;color:#1e1e1e;font-size:12px">: 40</div>
<svg style="left:1047px;top:706px" width="17" height="16" viewBox="0 0 17 16"><circle cx="8" cy="9" r="5.5" fill="#f5f5e8" stroke="#b0a070"/><path d="M3 5Q6 1 10 3" fill="none" stroke="#e0b030" stroke-width="2"/><rect x="9.5" y="7.5" width="7" height="7" fill="#dfeaf7" stroke="#5a7fb0"/></svg>
<div class="a" style="left:1042px;top:723px;width:38px;height:1px;background:#b0b8c8"></div>
<svg style="left:1075px;top:703px" width="3" height="20" viewBox="0 0 3 20"><rect x="0" y="1" width="2" height="2" fill="#9aa3b3"/><rect x="0" y="6" width="2" height="2" fill="#9aa3b3"/><rect x="0" y="11" width="2" height="2" fill="#9aa3b3"/><rect x="0" y="16" width="2" height="2" fill="#9aa3b3"/></svg>
<div class="a" style="left:1117px;top:617px;width:231px;height:99px;background:#e6e6e6;border:1px solid #d2d2d2"></div>
<div class="a" style="left:1124px;top:623px;width:218px;height:86px;background:#fff;border:1px solid #dadada"></div>
<div class="t" style="left:1125px;top:627px;color:#1a1a1a;font-weight:bold;font-size:12px">Updates Available</div>
<svg style="left:1324px;top:629px" width="9" height="9" viewBox="0 0 9 9"><path d="M1 1L8 8M8 1L1 8" stroke="#222" stroke-width="1.8"/></svg>
<div class="a" style="left:1124px;top:646px;width:218px;height:1px;background:#a0a0a0"></div>
<div class="t" style="left:1129px;top:656px;color:#1a1a1a;font-size:12px">Updates are available for your software.</div>
<div class="t" style="left:1129px;top:671px;color:#1a1a1a;font-size:12px">Click to review and install updates.</div>
<div class="t" style="left:1129px;top:690px;color:#1a1a1a;font-size:12px;letter-spacing:-0.2px">Set up <span style="color:#2a6fb8;text-decoration:underline">Reminder options</span></div>
<div class="a" style="left:0px;top:727px;width:1360px;height:2px;background:#2b2b2b"></div>
<div class="a" style="left:696px;top:0px;width:272px;height:729px;background:#f0f0f0;border-left:1px solid #979797;border-top:1px solid #979797;border-right:1px solid #979797;box-shadow:2px 2px 2px rgba(0,0,0,0.4)"></div>
<div class="a" style="left:963px;top:1px;width:1px;height:728px;background:#fbfbfb"></div>
<div class="a" style="left:725px;top:18px;width:1px;height:711px;background:#d7d7d7"></div>
<div class="a" style="left:726px;top:18px;width:1px;height:711px;background:#fff"></div>
<svg style="left:717px;top:8px" width="10" height="6" viewBox="0 0 10 6"><path d="M0 5.5L5 0.5L10 5.5Z" fill="#8a8a8a"/></svg>
<svg style="left:703px;top:23px" width="16" height="16" viewBox="0 0 16 16"><path d="M14 3Q15 12 7 11V14L1 8L7 3V6Q11 7 12 2Z" fill="#f4f4f4" stroke="#b8b8b8"/></svg>
<div class="t" style="left:731px;top:24px;color:#8d8d8d">Undo</div>
<div class="t" style="right:413px;top:24px;color:#8d8d8d">Ctrl+Z</div>
<div class="t" style="left:731px;top:46px;color:#8d8d8d">Revert File</div>
<svg style="left:703px;top:67px" width="16" height="16" viewBox="0 0 16 16"><rect x="0.5" y="0.5" width="14" height="14" rx="1" fill="#dbe6f3" stroke="#5f82b5"/><rect x="3" y="1" width="9" height="5" fill="#fff" stroke="#8aa5cc" stroke-width="0.6"/><rect x="4" y="9" width="7" height="5" fill="#9fb7d8"/></svg>
<div class="t" style="left:731px;top:68px;color:#1a1a1a">Save</div>
<div class="t" style="right:413px;top:68px;color:#1a1a1a">Ctrl+S</div>
<div class="a" style="left:727px;top:89px;width:240px;height:1px;background:#d7d7d7"></div>
<div class="a" style="left:727px;top:90px;width:240px;height:1px;background:#fff"></div>
<div class="t" style="left:731px;top:97px;color:#1a1a1a">Open Declaration</div>
<div class="t" style="right:413px;top:97px;color:#1a1a1a">F3</div>
<div class="t" style="left:731px;top:119px;color:#1a1a1a">Open Type Hierarchy</div>
<div class="t" style="right:413px;top:119px;color:#1a1a1a">F4</div>
<div class="t" style="left:731px;top:141px;color:#1a1a1a">Open Call Hierarchy</div>
<div class="t" style="right:413px;top:141px;color:#1a1a1a">Ctrl+Alt+H</div>
<div class="t" style="left:731px;top:163px;color:#1a1a1a">Show in Breadcrumb</div>
<div class="t" style="right:413px;top:163px;color:#1a1a1a">Alt+Shift+B</div>
<div class="t" style="left:731px;top:185px;color:#1a1a1a">Quick Outline</div>
<div class="t" style="right:413px;top:185px;color:#1a1a1a">Ctrl+O</div>
<div class="t" style="left:731px;top:207px;color:#1a1a1a">Quick Type Hierarchy</div>
<div class="t" style="right:413px;top:207px;color:#1a1a1a">Ctrl+T</div>
<div class="t" style="left:731px;top:229px;color:#1a1a1a">Open With</div>
<svg style="left:950px;top:232px" width="5" height="8" viewBox="0 0 5 8"><path d="M0 0L4.5 4L0 8Z" fill="#222"/></svg>
<div class="t" style="left:731px;top:251px;color:#1a1a1a">Show In</div>
<div class="t" style="right:413px;top:251px;color:#1a1a1a">Alt+Shift+W</div>
<svg style="left:950px;top:254px" width="5" height="8" viewBox="0 0 5 8"><path d="M0 0L4.5 4L0 8Z" fill="#222"/></svg>
<div class="a" style="left:727px;top:272px;width:240px;height:1px;background:#d7d7d7"></div>
<div class="a" style="left:727px;top:273px;width:240px;height:1px;background:#fff"></div>
<svg style="left:703px;top:279px" width="16" height="16" viewBox="0 0 16 16"><circle cx="3.5" cy="8.5" r="2.3" fill="none" stroke="#3a6aa0" stroke-width="1.4"/><circle cx="7" cy="12.5" r="2.3" fill="none" stroke="#3a6aa0" stroke-width="1.4"/><path d="M5.5 7.5L14 1M8 10.5L12 1" stroke="#4a5a6a" stroke-width="1.3"/></svg>
<div class="t" style="left:731px;top:280px;color:#1a1a1a">Cut</div>
<div class="t" style="right:413px;top:280px;color:#1a1a1a">Ctrl+X</div>
<svg style="left:703px;top:301px" width="16" height="16" viewBox="0 0 16 16"><rect x="0.5" y="0.5" width="9" height="11" fill="#eef3fa" stroke="#8a9ab8"/><rect x="4.5" y="3.5" width="9" height="11" fill="#f5f8fc" stroke="#6a82a8"/><path d="M6.5 6.5H11.5M6.5 8.5H11.5M6.5 10.5H11.5M6.5 12.5H10" stroke="#6a82b8"/></svg>
<div class="t" style="left:731px;top:302px;color:#1a1a1a">Copy</div>
<div class="t" style="right:413px;top:302px;color:#1a1a1a">Ctrl+C</div>
<svg style="left:703px;top:323px" width="16" height="16" viewBox="0 0 16 16"><rect x="0.5" y="0.5" width="9" height="10" fill="#eef3fa" stroke="#8a9ab8"/><rect x="5.5" y="4.5" width="10" height="10" fill="#f5f8fc" stroke="#6a82a8"/><path d="M7.5 7.5H13.5M7.5 9.5H13.5M7.5 11.5H13.5" stroke="#6a82b8"/></svg>
<div class="t" style="left:731px;top:324px;color:#1a1a1a">Copy Qualified Name</div>
<svg style="left:703px;top:345px" width="16" height="16" viewBox="0 0 16 16"><rect x="1.5" y="2.5" width="11" height="12" fill="#f3dca0" stroke="#b89040"/><rect x="4" y="0.5" width="6" height="3" fill="#ddd" stroke="#888"/><rect x="6.5" y="6.5" width="8" height="9" fill="#fff" stroke="#7a8aa8"/></svg>
<div class="t" style="left:731px;top:346px;color:#1a1a1a">Paste</div>
<div class="t" style="right:413px;top:346px;color:#1a1a1a">Ctrl+V</div>
<div class="a" style="left:727px;top:367px;width:240px;height:1px;background:#d7d7d7"></div>
<div class="a" style="left:727px;top:368px;width:240px;height:1px;background:#fff"></div>
<div class="t" style="left:731px;top:375px;color:#1a1a1a">Quick Fix</div>
<div class="t" style="right:413px;top:375px;color:#1a1a1a">Ctrl+1</div>
<div class="t" style="left:731px;top:397px;color:#1a1a1a">Source</div>
<div class="t" style="right:413px;top:397px;color:#1a1a1a">Alt+Shift+S</div>
<svg style="left:950px;top:400px" width="5" height="8" viewBox="0 0 5 8"><path d="M0 0L4.5 4L0 8Z" fill="#222"/></svg>
<div class="t" style="left:731px;top:419px;color:#1a1a1a">Refactor</div>
<div class="t" style="right:413px;top:419px;color:#1a1a1a">Alt+Shift+T</div>
<svg style="left:950px;top:422px" width="5" height="8" viewBox="0 0 5 8"><path d="M0 0L4.5 4L0 8Z" fill="#222"/></svg>
<div class="t" style="left:731px;top:441px;color:#1a1a1a">Surround With</div>
<div class="t" style="right:413px;top:441px;color:#1a1a1a">Alt+Shift+Z</div>
<svg style="left:950px;top:444px" width="5" height="8" viewBox="0 0 5 8"><path d="M0 0L4.5 4L0 8Z" fill="#222"/></svg>
<div class="t" style="left:731px;top:463px;color:#1a1a1a">Local History</div>
<svg style="left:950px;top:466px" width="5" height="8" viewBox="0 0 5 8"><path d="M0 0L4.5 4L0 8Z" fill="#222"/></svg>
<div class="a" style="left:727px;top:484px;width:240px;height:1px;background:#d7d7d7"></div>
<div class="a" style="left:727px;top:485px;width:240px;height:1px;background:#fff"></div>
<div class="t" style="left:731px;top:492px;color:#1a1a1a">References</div>
<svg style="left:950px;top:495px" width="5" height="8" viewBox="0 0 5 8"><path d="M0 0L4.5 4L0 8Z" fill="#222"/></svg>
<div class="t" style="left:731px;top:514px;color:#1a1a1a">Declarations</div>
<svg style="left:950px;top:517px" width="5" height="8" viewBox="0 0 5 8"><path d="M0 0L4.5 4L0 8Z" fill="#222"/></svg>
<div class="a" style="left:727px;top:535px;width:240px;height:1px;background:#d7d7d7"></div>
<div class="a" style="left:727px;top:536px;width:240px;height:1px;background:#fff"></div>
<svg style="left:703px;top:542px" width="16" height="16" viewBox="0 0 16 16"><rect x="3.5" y="3.5" width="12" height="11" fill="#fff" stroke="#6a82a8"/><path d="M6 8H13M6 11H13" stroke="#e0a020" stroke-width="1.4"/><path d="M0 0V6M0 0H6" stroke="#3a6ab0" stroke-width="1.5"/></svg>
<div class="t" style="left:731px;top:543px;color:#1a1a1a">Add to Snippets...</div>
<div class="a" style="left:727px;top:564px;width:240px;height:1px;background:#d7d7d7"></div>
<div class="a" style="left:727px;top:565px;width:240px;height:1px;background:#fff"></div>
<svg style="left:703px;top:571px" width="16" height="16" viewBox="0 0 16 16"><path d="M2 4L8 1V14L2 11Z" fill="#9ac0e8" stroke="#3a6ab0"/><path d="M8 1L14 4V11L8 14" fill="#5a8ad0" stroke="#2a5aa0"/></svg>
<div class="t" style="left:731px;top:572px;color:#1a1a1a">All Instances...</div>
<div class="t" style="right:413px;top:572px;color:#1a1a1a">Ctrl+Shift+N</div>
<div class="t" style="left:731px;top:594px;color:#1a1a1a">Instance Count...</div>
<div class="t" style="left:731px;top:616px;color:#1a1a1a">Force Return</div>
<div class="t" style="right:413px;top:616px;color:#1a1a1a">Alt+Shift+F</div>
<div class="a" style="left:727px;top:635px;width:39px;height:19px;background:#e6ec10;border-radius:1px 3px 1px 1px"></div>
<svg style="left:703px;top:637px" width="16" height="16" viewBox="0 0 16 16"><text x="0" y="7" font-size="9" font-family="Liberation Sans" fill="#5a6a88">x+y</text><text x="1" y="15" font-size="9" font-family="Liberation Sans" fill="#5a6a88">=?</text></svg>
<div class="t" style="left:731px;top:638px;color:#1a1a1a">Watch</div>
<div class="a" style="left:699px;top:656px;width:266px;height:22px;background:#d5e6f7;border:1px solid #99c6ef;border-radius:1px"></div>
<div class="a" style="left:727px;top:656px;width:221px;height:21px;background:#e0e812;border-radius:2px 8px 2px 3px"></div>
<svg style="left:703px;top:659px" width="16" height="16" viewBox="0 0 16 16"><circle cx="6" cy="6" r="5" fill="#fff" stroke="#8a8a8a" stroke-width="1.3"/><path d="M10 10L15 15" stroke="#777" stroke-width="2.2"/></svg>
<div class="t" style="left:731px;top:660px;color:#1a1a1a">Inspect</div>
<div class="t" style="right:413px;top:660px;color:#1a1a1a">Ctrl+Shift+I</div>
<svg style="left:703px;top:681px" width="16" height="16" viewBox="0 0 16 16"><path d="M1.5 1.5H9.5L12.5 4.5V15.5H1.5Z" fill="#eef6ea" stroke="#5a7a98"/><path d="M8 5V11Q8 13 5 12.5" fill="none" stroke="#2a5db0" stroke-width="1.5"/></svg>
<div class="t" style="left:731px;top:682px;color:#1a1a1a">Display</div>
<div class="t" style="right:413px;top:682px;color:#1a1a1a">Ctrl+Shift+D</div>
<svg style="left:703px;top:703px" width="16" height="16" viewBox="0 0 16 16"><circle cx="6" cy="6" r="5.5" fill="#3fa845" stroke="#2a7e2e"/><path d="M4.5 3L9 6L4.5 9Z" fill="#fff"/><path d="M6.5 6.5H13.5L15.5 8.5V16.5H6.5Z" fill="#fff" stroke="#5a7a98"/><path d="M12 9V14Q12 15.5 9.5 15" fill="none" stroke="#2a5db0" stroke-width="1.3"/></svg>
<div class="t" style="left:731px;top:704px;color:#1a1a1a">Execute</div>
<div class="t" style="right:413px;top:704px;color:#1a1a1a">Ctrl+U</div>
<svg style="left:703px;top:725px" width="16" height="16" viewBox="0 0 16 16"><path d="M4 0V16" stroke="#555"/></svg>
<div class="t" style="left:731px;top:726px;color:#1a1a1a">Run to Line</div>
<div class="t" style="right:413px;top:726px;color:#1a1a1a">Ctrl+R</div>
</body></html>
